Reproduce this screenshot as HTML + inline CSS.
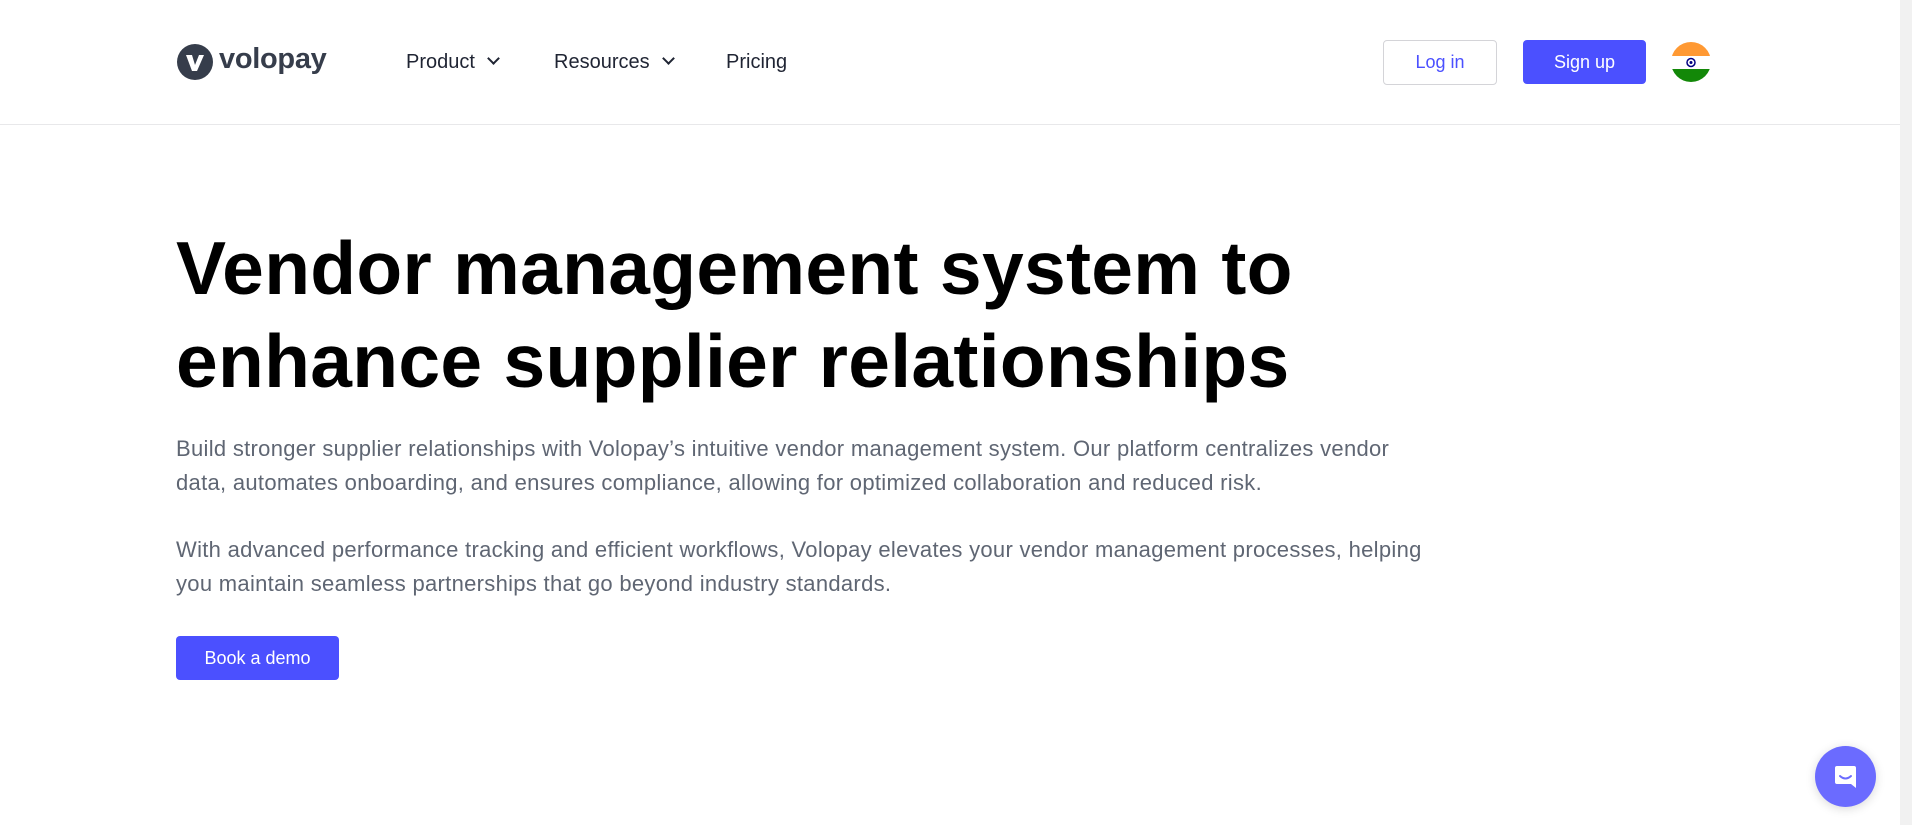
<!DOCTYPE html>
<html style="height:825px;overflow:hidden"><head><meta charset="utf-8"><style>
*{margin:0;padding:0;box-sizing:border-box}
body{width:1912px;height:825px;overflow:hidden;background:#fff;font-family:"Liberation Sans",sans-serif;position:relative}
.hdr{position:absolute;left:0;top:0;width:1900px;height:125px;border-bottom:1px solid #e8e8ea}
.sb{position:absolute;right:0;top:0;width:12px;height:825px;background:#f1f1f1}
.abs{position:absolute}
.nav{font-size:20px;color:#1f2433;top:51px}
.chev{display:inline-block;width:9px;height:9px;border-right:2px solid #1f2433;border-bottom:2px solid #1f2433;transform:rotate(45deg);margin-left:14px;position:relative;top:-5px}
h1{position:absolute;left:176px;top:222px;font-size:75px;line-height:93px;font-weight:700;color:#000;letter-spacing:0.3px}
p{position:absolute;left:176px;font-size:22px;line-height:34px;color:#5f6673;width:1500px;letter-spacing:0.3px}
</style></head><body>
<div class="hdr"></div>
<div class="sb"></div>
<svg class="abs" style="left:177px;top:44px" width="36" height="36" viewBox="0 0 36 36"><circle cx="18" cy="18" r="18" fill="#363d4b"/><path d="M9 11 L15 11 L18 21 L22 11 L27 11 L20 27 L15 27 Z" fill="#fff"/></svg>
<div class="abs" style="left:219px;top:43px;font-size:29px;font-weight:700;color:#363d4b;letter-spacing:-0.3px">volopay</div>
<div class="abs nav" style="left:406px">Product<span class="chev"></span></div>
<div class="abs nav" style="left:554px">Resources<span class="chev"></span></div>
<div class="abs nav" style="left:726px">Pricing</div>
<div class="abs" style="left:1383px;top:40px;width:114px;height:45px;border:1px solid #d4d4d8;border-radius:4px;color:#4b50ff;font-size:18px;text-align:center;line-height:43px">Log in</div>
<div class="abs" style="left:1523px;top:40px;width:123px;height:44px;background:#4b50ff;border-radius:4px;color:#fff;font-size:18px;text-align:center;line-height:44px">Sign up</div>
<svg class="abs" style="left:1671px;top:42px" width="40" height="40" viewBox="0 0 40 40"><clipPath id="c"><circle cx="20" cy="20" r="20"/></clipPath><g clip-path="url(#c)"><rect width="40" height="14" fill="#ff9933"/><rect y="14" width="40" height="13" fill="#fff"/><rect y="27" width="40" height="13" fill="#138808"/><circle cx="20" cy="20.5" r="4" fill="none" stroke="#000080" stroke-width="1.5"/><circle cx="20" cy="20.5" r="1.5" fill="#000080"/></g></svg>
<h1>Vendor management system to<br>enhance supplier relationships</h1>
<p style="top:432px">Build stronger supplier relationships with Volopay’s intuitive vendor management system. Our platform centralizes vendor<br>data, automates onboarding, and ensures compliance, allowing for optimized collaboration and reduced risk.</p>
<p style="top:533px">With advanced performance tracking and efficient workflows, Volopay elevates your vendor management processes, helping<br>you maintain seamless partnerships that go beyond industry standards.</p>
<div class="abs" style="left:176px;top:636px;width:163px;height:44px;background:#4b50ff;border-radius:4px;color:#fff;font-size:18px;text-align:center;line-height:44px">Book a demo</div>
<div class="abs" style="left:455px;top:812px;height:13px;overflow:hidden;width:1000px"><div style="font-size:48px;font-weight:700;color:#1a1a1a;position:relative;top:8px;white-space:nowrap">Everything you need to manage vendors</div></div>
<div class="abs" style="left:1815px;top:746px;width:61px;height:61px;border-radius:50%;background:#6b6bff;box-shadow:0 2px 10px rgba(0,0,0,.15)"></div>
<svg class="abs" style="left:1833px;top:764px" width="25" height="26" viewBox="0 0 25 26"><path d="M4 2 H21 A2 2 0 0 1 23 4 V24 L18 20 H4 A2 2 0 0 1 2 18 V4 A2 2 0 0 1 4 2Z" fill="#fff"/><path d="M7 12 Q12.5 17 18 12" fill="none" stroke="#6b6bff" stroke-width="2" stroke-linecap="round"/></svg>
</body></html>
